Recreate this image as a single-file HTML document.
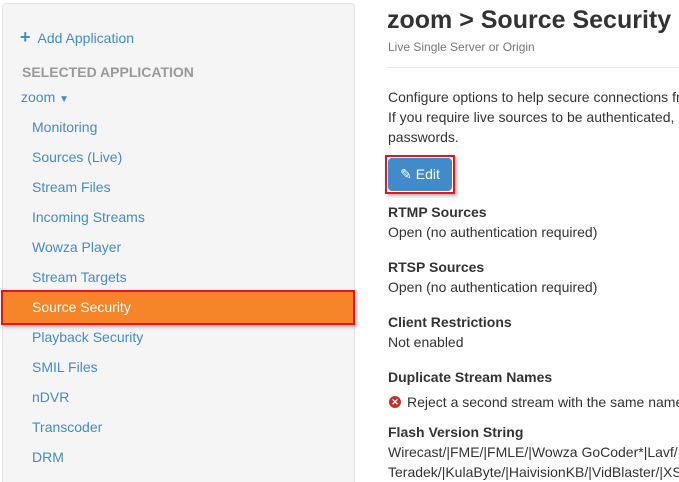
<!DOCTYPE html><html><head><style>
html,body{margin:0;width:679px;height:482px;overflow:hidden}
body{background:#fff;font-family:"Liberation Sans",Arial,sans-serif;font-size:14px;color:#333;position:relative}
.p{position:absolute;white-space:nowrap}
#side{position:absolute;left:2px;top:3px;width:353px;height:479px;background:#f5f5f5;border:1px solid #e3e3e3;border-bottom:none;border-radius:4px 4px 0 0;box-sizing:border-box}
.n{position:absolute;left:32px;color:#428bca;font-size:14px;line-height:20px}
.h{font-weight:bold}
</style></head><body>
<div id="side"></div>
<div class="p" style="left:20px;top:27px;color:#428bca;line-height:20px"><span style="font-weight:bold;font-size:18px">+</span>&nbsp; Add Application</div>
<div class="p" style="left:22px;top:62px;color:#999;font-weight:bold;line-height:20px">SELECTED APPLICATION</div>
<div class="p" style="left:21px;top:87px;color:#428bca;line-height:20px">zoom <span style="font-size:10px">&#9660;</span></div>
<div class="n" style="top:117px">Monitoring</div>
<div class="n" style="top:147px">Sources (Live)</div>
<div class="n" style="top:177px">Stream Files</div>
<div class="n" style="top:207px">Incoming Streams</div>
<div class="n" style="top:237px">Wowza Player</div>
<div class="n" style="top:267px">Stream Targets</div>
<div class="p" style="left:1px;top:290px;width:350px;height:31px;background:#f68428;border:2px solid #e8141a;box-shadow:2px 2px 3px rgba(0,0,0,.3)"></div>
<div class="n" style="top:297px;color:#fff">Source Security</div>
<div class="n" style="top:327px">Playback Security</div>
<div class="n" style="top:357px">SMIL Files</div>
<div class="n" style="top:387px">nDVR</div>
<div class="n" style="top:417px">Transcoder</div>
<div class="n" style="top:447px">DRM</div>
<div class="p" style="left:387px;top:4px;font-size:25px;font-weight:bold;line-height:32px">zoom &gt; Source Security</div>
<div class="p" style="left:388px;top:40px;font-size:12px;color:#777">Live Single Server or Origin</div>
<div class="p" style="left:387px;top:67px;width:292px;border-top:1px solid #e5e5e5"></div>
<div class="p" style="left:388px;top:87px;line-height:20px">Configure options to help secure connections fr<br>If you require live sources to be authenticated, u<br>passwords.</div>
<div class="p" style="left:385px;top:155px;width:70px;height:39px;border:2px solid #e8141a;box-sizing:border-box;box-shadow:2px 2px 3px rgba(0,0,0,.3)"></div>
<div class="p" style="left:388px;top:158px;width:64px;height:33px;background:#428bca;border-radius:4px;color:#fff;line-height:33px;text-align:center">&#9998; Edit</div>
<div class="p h" style="left:388px;top:202px;line-height:20px">RTMP Sources</div>
<div class="p" style="left:388px;top:222px;line-height:20px">Open (no authentication required)</div>
<div class="p h" style="left:388px;top:257px;line-height:20px">RTSP Sources</div>
<div class="p" style="left:388px;top:277px;line-height:20px">Open (no authentication required)</div>
<div class="p h" style="left:388px;top:312px;line-height:20px">Client Restrictions</div>
<div class="p" style="left:388px;top:332px;line-height:20px">Not enabled</div>
<div class="p h" style="left:388px;top:367px;line-height:20px">Duplicate Stream Names</div>
<div class="p" style="left:389px;top:396px;width:12px;height:12px;border-radius:50%;background:#c9302c;color:#fff;font-size:9px;line-height:12px;text-align:center;font-weight:bold">✕</div>
<div class="p" style="left:407px;top:392px;line-height:20px">Reject a second stream with the same name</div>
<div class="p h" style="left:388px;top:422px;line-height:20px">Flash Version String</div>
<div class="p" style="left:388px;top:442px;line-height:20px">Wirecast/|FME/|FMLE/|Wowza GoCoder*|Lavf/|<br>Teradek/|KulaByte/|HaivisionKB/|VidBlaster/|XS</div>
</body></html>
